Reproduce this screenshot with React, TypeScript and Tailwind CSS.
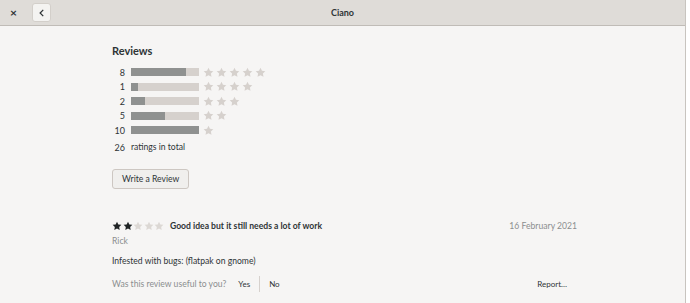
const ratings = [
  { count: 8, stars: 5, fill: 55 },
  { count: 1, stars: 4, fill: 7 },
  { count: 2, stars: 3, fill: 14 },
  { count: 5, stars: 2, fill: 34 },
  { count: 10, stars: 1, fill: 68 },
];

const Star = ({ className }: { className: string }) => (
  <svg viewBox="0 0 24 24" className={className} fill="currentColor">
    <path d="M12 1.5l3.2 6.6 7.3 1-5.3 5 1.3 7.3L12 17.9l-6.5 3.5 1.3-7.3-5.3-5 7.3-1z" />
  </svg>
);

export default function App() {
  return (
    <div className="w-[690px] h-[303px] overflow-hidden flex bg-white font-['Lato',sans-serif] text-[8.6px] text-[#2e3436]">
      <div className="w-[686px] h-full flex flex-col bg-[#f6f5f4] border-r border-[#c8c4bf]">
        {/* header bar */}
        <div className="h-[26px] shrink-0 flex items-center bg-[#dfdcd8] border-b border-[#c0bcb7] relative">
          <span className="w-[27px] flex justify-center text-[12px] font-bold text-[#2e3436] leading-none">×</span>
          <button className="ml-[5px] w-[19px] h-[19px] flex items-center justify-center rounded-[3px] bg-[#f4f3f1] border border-[#d3cfca]">
            <svg viewBox="0 0 16 16" className="w-[10px] h-[10px]" fill="none" stroke="#2e3436" strokeWidth="2">
              <path d="M10 3L5 8l5 5" />
            </svg>
          </button>
          <span className="absolute left-0 right-0 text-center font-bold text-[9px] pointer-events-none">Ciano</span>
        </div>

        <div className="pl-[112px] pr-[108px] flex flex-col">
          <h2 className="mt-[19px] text-[11px] font-bold leading-none">Reviews</h2>

          <div className="mt-[12px] flex flex-col gap-[6.5px]">
            {ratings.map((r) => (
              <div key={r.stars} className="flex items-center h-[8px]">
                <span className="w-[13px] text-right text-[9px] leading-none">{r.count}</span>
                <div className="ml-[6px] w-[68px] h-[8px] bg-[#d6d1cd] flex">
                  <div className="h-full bg-[#8f9190]" style={{ width: r.fill }} />
                </div>
                <div className="ml-[4px] flex gap-[2px]">
                  {Array.from({ length: r.stars }).map((_, i) => (
                    <Star key={i} className="w-[11px] h-[11px] text-[#d6d1cd]" />
                  ))}
                </div>
              </div>
            ))}
          </div>

          <div className="mt-[9px] flex items-center leading-none">
            <span className="w-[13px] text-right text-[9px]">26</span>
            <span className="ml-[6px]">ratings in total</span>
          </div>

          <div className="mt-[17px]">
            <button className="h-[20px] px-[9px] rounded-[3px] border border-[#cdc7c2] bg-[#f0efed] leading-none">
              Write a Review
            </button>
          </div>

          <div className="mt-[32px] flex items-center justify-between leading-none">
            <div className="flex items-center">
              <div className="flex gap-[0.5px]">
                {[0, 1, 2, 3, 4].map((i) => (
                  <Star key={i} className={`w-[10px] h-[10px] ${i < 2 ? "text-[#1f2324]" : "text-[#dcd8d4]"}`} />
                ))}
              </div>
              <span className="ml-[6px] font-bold">Good idea but it still needs a lot of work</span>
            </div>
            <span className="text-[#8b8e8f]">16 February 2021</span>
          </div>
          <div className="mt-[6px] text-[#8b8e8f] leading-none">Rick</div>
          <div className="mt-[11px] leading-none">Infested with bugs: (flatpak on gnome)</div>

          <div className="mt-[11px] flex items-center justify-between leading-none">
            <div className="flex items-center h-[16px]">
              <span className="text-[#8b8e8f]">Was this review useful to you?</span>
              <span className="ml-[12px] text-[8px]">Yes</span>
              <span className="ml-[9px] w-px h-[16px] bg-[#d6d1cd]" />
              <span className="ml-[9px] text-[8px]">No</span>
            </div>
            <span className="mr-[10px] text-[8px]">Report…</span>
          </div>
        </div>
      </div>
    </div>
  );
}
